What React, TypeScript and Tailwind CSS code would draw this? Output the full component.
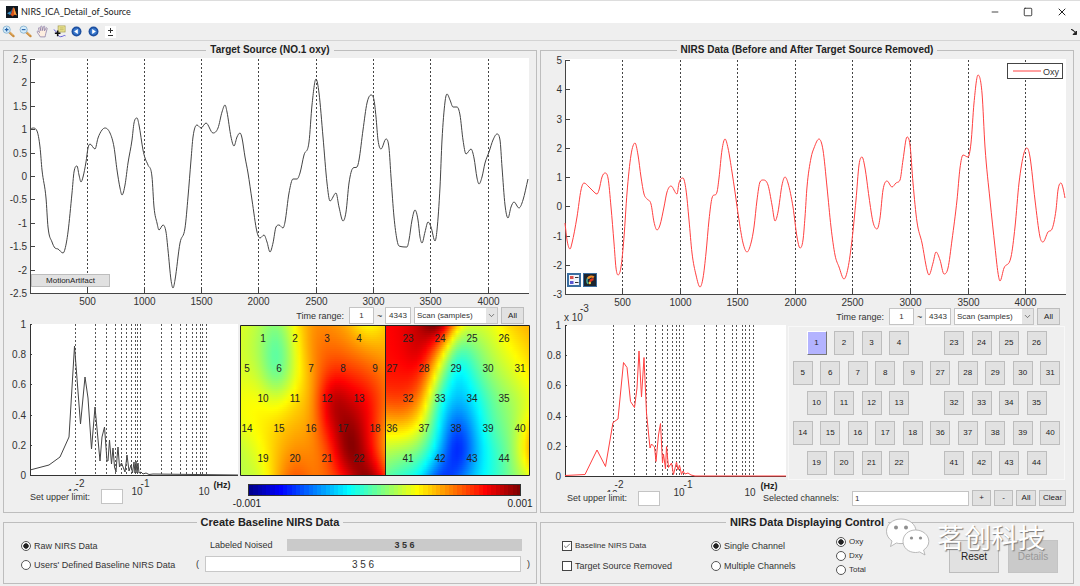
import React, { useState } from 'react';
import { Check, ChevronDown, Minus, Square, X } from 'lucide-react';

type Point = [number, number];

const sourceTrace: Point[] = [
    [30, 129], [33, 128], [37, 131], [40, 147], [42, 170], [46, 198], [48, 227], [52, 242], [55, 248], [58, 249], [63, 253], [65, 249],
    [68, 232], [72, 193], [74, 172], [77, 166], [79, 175], [81, 182], [83, 177], [86, 162], [88, 148], [90, 144], [95, 149], [98, 138],
    [102, 130], [105, 128], [110, 133], [114, 147], [117, 170], [120, 188], [122, 195], [125, 185], [128, 163], [132, 140], [134, 123],
    [137, 118], [139, 125], [143, 150], [145, 158], [148, 165], [152, 177], [154, 207], [157, 223], [159, 230], [163, 225], [166, 232],
    [168, 250], [171, 280], [173, 288], [175, 280], [180, 243], [185, 228], [188, 197], [191, 160], [193, 137], [197, 125], [201, 128],
    [206, 123], [213, 133], [218, 128], [222, 112], [225, 105], [227, 112], [231, 137], [234, 146], [237, 137], [240, 133], [242, 138],
    [245, 157], [248, 173], [252, 200], [257, 232], [260, 238], [264, 235], [267, 242], [270, 252], [273, 243], [276, 227], [279, 225],
    [283, 228], [285, 222], [289, 193], [293, 179], [297, 179], [300, 173], [304, 155], [309, 142], [312, 105], [316, 79], [319, 93],
    [323, 137], [327, 183], [330, 201], [336, 193], [339, 207], [343, 221], [346, 212], [349, 183], [353, 168], [357, 167], [359, 160],
    [363, 130], [367, 103], [371, 95], [374, 100], [376, 117], [378, 140], [381, 149], [386, 139], [389, 148], [391, 177], [394, 217],
    [397, 240], [399, 246], [407, 247], [409, 240], [412, 220], [415, 210], [418, 220], [420, 237], [422, 243], [425, 232], [428, 222],
    [431, 227], [435, 241], [437, 230], [440, 187], [442, 140], [445, 102], [447, 94], [450, 100], [453, 107], [457, 107], [460, 115],
    [463, 140], [466, 154], [471, 149], [474, 158], [477, 178], [479, 184], [482, 177], [485, 163], [489, 152], [493, 140], [497, 134],
    [500, 140], [502, 167], [505, 205], [508, 218], [511, 207], [514, 202], [519, 208], [523, 200], [528, 179],
];

const oxyTrace: Point[] = [
    [565, 223], [567, 240], [570, 249], [572, 243], [577, 217], [581, 190], [584, 183], [589, 187], [593, 191], [597, 194], [599, 190],
    [602, 177], [605, 173], [608, 178], [611, 207], [614, 243], [616, 268], [618, 275], [621, 267], [624, 237], [627, 193], [631, 155],
    [635, 143], [638, 155], [641, 177], [644, 194], [647, 199], [651, 204], [654, 222], [657, 230], [660, 225], [664, 207], [667, 192],
    [671, 186], [677, 194], [679, 183], [683, 178], [686, 190], [689, 220], [692, 253], [696, 275], [700, 287], [703, 278], [706, 253],
    [709, 220], [712, 198], [717, 192], [719, 178], [722, 150], [725, 139], [728, 148], [732, 172], [735, 192], [739, 220], [743, 243],
    [747, 252], [751, 243], [754, 227], [757, 200], [760, 182], [763, 180], [768, 185], [772, 205], [775, 221], [778, 212], [782, 185],
    [785, 177], [788, 183], [793, 207], [797, 237], [800, 248], [803, 240], [805, 217], [807, 187], [811, 158], [814, 148], [819, 139],
    [823, 150], [827, 187], [831, 227], [835, 255], [839, 267], [844, 279], [848, 268], [852, 240], [856, 200], [859, 165], [862, 157],
    [865, 168], [869, 197], [873, 222], [877, 229], [880, 218], [883, 190], [887, 181], [892, 187], [896, 183], [900, 180], [903, 160],
    [907, 137], [910, 145], [913, 183], [917, 222], [922, 243], [927, 270], [929, 275], [933, 263], [936, 252], [940, 260], [944, 274],
    [948, 268], [952, 240], [957, 200], [960, 168], [963, 155], [968, 157], [971, 143], [974, 103], [978, 75], [982, 93], [985, 147],
    [990, 200], [995, 247], [998, 273], [1000, 281], [1004, 268], [1011, 257], [1015, 227], [1019, 183], [1024, 153], [1027, 148],
    [1030, 157], [1035, 200], [1040, 237], [1043, 242], [1048, 232], [1052, 229], [1056, 210], [1058, 190], [1061, 183], [1063, 188],
    [1065, 198],
];

const sourceSpectrum =
    '30,470 49,465 60,457 69,437 74.5,346 80.5,424 85,377 88,398 91.5,449 95,407 100,461 102,437 104.5,427 107,461 108,461 109.5,440 111.5,464 113,448 114.5,467 116,472 117,458 118,447 119.5,467 121.5,463 125,472 127,455 129,471 131,465 132.5,473 134,462 135,473 136,461 137,473 138,463 139,473 141,472 143,474 146,473 149,474.5 153,474 238,475';

const oxySpectrum =
    '565,475.5 575,475 585,474.5 597,450 605.5,466.5 613,422.5 618,419 623.5,362.5 627,367.5 630.5,401.5 634.5,407.5 637,388 639,351 641.5,397 644,357.5 646.5,413 650,448 651.5,444 654.5,447 656,461.5 658.5,435 660.5,423.5 662.5,463 663.5,454 665.5,469 666.5,446.5 668.5,467.5 671.5,463 673.5,474.5 676.5,462 678,470 679.5,465 681.5,474.5 683,471 685,474 688,473 691,475 695,476 786,476';

const sourceFreqLines = [75, 95, 106, 115, 121, 126, 131, 135, 137, 140, 161, 171, 180, 186, 192, 196, 200, 202, 206];
const oxyFreqLines = [613, 634, 646, 655, 662, 667, 672, 676, 679, 683, 704, 716, 724, 732, 736, 742, 745, 749, 753];

// Relative activation, sampled on a 9 x 7 lattice for each probe
const leftField = [
    [0.59, 0.56, 0.47, 0.63, 0.75, 0.74, 0.71, 0.61, 0.67],
    [0.58, 0.55, 0.4, 0.6, 0.76, 0.78, 0.76, 0.73, 0.71],
    [0.59, 0.58, 0.42, 0.6, 0.72, 0.86, 0.84, 0.81, 0.76],
    [0.62, 0.63, 0.59, 0.66, 0.7, 1.01, 0.92, 0.89, 0.78],
    [0.61, 0.64, 0.67, 0.7, 0.71, 0.93, 1.01, 0.9, 0.74],
    [0.56, 0.61, 0.69, 0.74, 0.73, 0.81, 1.08, 0.91, 0.71],
    [0.56, 0.57, 0.7, 0.81, 0.74, 0.79, 0.92, 1.03, 0.82],
];

const rightField = [
    [0.87, 0.89, 0.94, 1.08, 0.6, 0.57, 0.6, 0.67, 0.7],
    [0.87, 0.88, 0.96, 0.72, 0.4, 0.49, 0.57, 0.62, 0.67],
    [0.86, 0.86, 0.86, 0.56, 0.29, 0.44, 0.53, 0.58, 0.64],
    [0.81, 0.83, 0.76, 0.39, 0.29, 0.36, 0.48, 0.53, 0.59],
    [0.68, 0.7, 0.63, 0.37, 0.16, 0.32, 0.47, 0.51, 0.64],
    [0.56, 0.54, 0.5, 0.34, 0.06, 0.29, 0.42, 0.49, 0.72],
    [0.48, 0.43, 0.39, 0.17, 0.18, 0.33, 0.41, 0.49, 0.61],
];

const channelRows = [
    { left: [1, 2, 3, 4], right: [23, 24, 25, 26] },
    { left: [5, 6, 7, 8, 9], right: [27, 28, 29, 30, 31] },
    { left: [10, 11, 12, 13], right: [32, 33, 34, 35] },
    { left: [14, 15, 16, 17, 18], right: [36, 37, 38, 39, 40] },
    { left: [19, 20, 21, 22], right: [41, 42, 43, 44] },
];

const clamp = (v: number) => Math.max(0, Math.min(1, v));

const jet = (v: number) => {
    const c = [3, 2, 1].map((k) => Math.round(255 * clamp(1.5 - Math.abs(4 * v - k))));
    return `rgb(${c[0]},${c[1]},${c[2]})`;
};

// Cubic B-spline over evenly spaced values, t runs from 0 to 1
const spline = (values: number[], t: number) => {
    const pos = t * (values.length - 1);
    const i = Math.min(Math.floor(pos), values.length - 2);
    const f = pos - i;
    const g = 1 - f;
    const b = values[i];
    const c = values[i + 1];
    const a = values[i - 1] ?? 2 * b - c;
    const d = values[i + 2] ?? 2 * c - b;
    return (g * g * g * a + (3 * f * f * f - 6 * f * f + 4) * b + (3 * g * g * g - 6 * g * g + 4) * c + f * f * f * d) / 6;
};

// Monotone cubic path, so that peaks do not overshoot
const smoothPath = (pts: Point[]) => {
    const slopes = pts.slice(1).map((p, i) => (p[1] - pts[i][1]) / (p[0] - pts[i][0]));
    const tangents = pts.map((_, i) => {
        const before = slopes[i - 1];
        const after = slopes[i];
        if (before === undefined) return after;
        if (after === undefined) return before;
        if (before * after <= 0) return 0;
        const limit = 3 * Math.min(Math.abs(before), Math.abs(after));
        return Math.sign(before) * Math.min(Math.abs(before + after) / 2, limit);
    });
    let d = `M${pts[0][0]},${pts[0][1]}`;
    for (let i = 1; i < pts.length; i++) {
        const [x0, y0] = pts[i - 1];
        const [x1, y1] = pts[i];
        const h = (x1 - x0) / 3;
        d += `C${x0 + h},${(y0 + tangents[i - 1] * h).toFixed(2)} ${x1 - h},${(y1 - tangents[i] * h).toFixed(2)} ${x1},${y1}`;
    }
    return d;
};

interface TimeChartProps {
    label: string;
    viewBox: string;
    left: number;
    right: number;
    top: number;
    bottom: number;
    firstTick: number;
    step: number;
    yTicks: string[];
    trace: Point[];
    color: string;
    children?: React.ReactNode;
}

const TimeChart = ({ label, viewBox, left, right, top, bottom, firstTick, step, yTicks, trace, color, children }: TimeChartProps) => {
    const ticks = [500, 1000, 1500, 2000, 2500, 3000, 3500, 4000];
    const yStep = (bottom - top) / (yTicks.length - 1);

    return (
        <svg viewBox={viewBox} className="block h-auto w-full overflow-visible text-[10px]" role="img" aria-label={label}>
            <rect x={left} y={top - 1} width={right - left} height={bottom - top + 1} fill="#fff" />
            {ticks.map((tick, i) => {
                const x = Math.round(firstTick + i * step) + 0.5;
                return (
                    <g key={tick}>
                        <line x1={x} x2={x} y1={top} y2={bottom} stroke="#444" strokeDasharray="2 2" />
                        <line x1={x} x2={x} y1={bottom - 5} y2={bottom} stroke="#444" />
                        <text x={x} y={bottom + 12} textAnchor="middle" fill="#333">{tick}</text>
                    </g>
                );
            })}
            {yTicks.map((tick, i) => {
                const y = Math.round(top + i * yStep);
                return (
                    <g key={tick}>
                        <line x1={left} x2={left + 5} y1={y + 0.5} y2={y + 0.5} stroke="#444" />
                        <text x={left - 3} y={y + 4} textAnchor="end" fill="#333">{tick}</text>
                    </g>
                );
            })}
            <path d={`M${left + 0.5},${top}V${bottom + 0.5}H${right}`} fill="none" stroke="#444" />
            <path d={smoothPath(trace)} fill="none" stroke={color} />
            {children}
        </svg>
    );
};

interface SpectrumProps {
    label: string;
    viewBox: string;
    left: number;
    right: number;
    top: number;
    lines: number[];
    points: string;
    color: string;
    exponents: Point;
    bases: [number, number, number];
    hz: number;
    children?: React.ReactNode;
}

const Spectrum = ({ label, viewBox, left, right, top, lines, points, color, exponents, bases, hz, children }: SpectrumProps) => {
    const bottom = top + 151;
    const clipId = `clip-${left}`;

    return (
        <svg viewBox={viewBox} className="block h-auto w-full overflow-visible text-[10px]" role="img" aria-label={label}>
            <clipPath id={clipId}>
                <rect x={left} y={bottom} width="100" height="16" />
            </clipPath>
            <rect x={left} y={top} width={right - left} height={151} fill="#fff" />
            {lines.map((x) => (
                <line key={x} x1={x + 0.5} x2={x + 0.5} y1={top} y2={bottom} stroke="#555" strokeDasharray="2 2" />
            ))}
            {['1', '0.8', '0.6', '0.4', '0.2', '0'].map((tick, i) => {
                const y = Math.round(top + i * 30.2);
                return (
                    <g key={tick}>
                        <line x1={left} x2={left + 2} y1={y + 0.5} y2={y + 0.5} stroke="#444" />
                        <text x={left - 4} y={y + 4} textAnchor="end" fill="#333">{tick}</text>
                    </g>
                );
            })}
            <path d={`M${left + 0.5},${top}V${bottom + 0.5}H${right}`} fill="none" stroke="#333" />
            <polyline points={points} fill="none" stroke={color} />
            <text x={exponents[0]} y={bottom + 12} textAnchor="middle" fill="#333">-2</text>
            <text x={exponents[1]} y={bottom + 12} textAnchor="middle" fill="#333">-1</text>
            <text x={bases[0]} y={bottom + 22} textAnchor="middle" fill="#333" clipPath={`url(#${clipId})`}>10</text>
            <text x={bases[1]} y={bottom + 20} textAnchor="middle" fill="#333">10</text>
            <text x={bases[2]} y={bottom + 20} textAnchor="middle" fill="#333">10</text>
            <text x={hz} y={bottom + 13} textAnchor="middle" fontWeight="bold" fontSize="9" fill="#222">(Hz)</text>
            {children}
        </svg>
    );
};

const HeatHalf = ({ field, x, name }: { field: number[][]; x: number; name: string }) => {
    const rows = Array.from({ length: 75 }, (_, r) => {
        const t = r / 74;
        return field[0].map((_, c) => spline(field.map((line) => line[c]), t));
    });

    return (
        <>
            {rows.map((row, r) => (
                <g key={r}>
                    <linearGradient id={`${name}-${r}`}>
                        {Array.from({ length: 33 }, (_, s) => (
                            <stop key={s} offset={s / 32} stopColor={jet(clamp(spline(row, s / 32)))} />
                        ))}
                    </linearGradient>
                    <rect x={x} y={325 + r * 2} width="144" height="2" fill={`url(#${name}-${r})`} shapeRendering="crispEdges" />
                </g>
            ))}
        </>
    );
};

const HeatMap = () => (
    <svg viewBox="240 324 296 186" className="block h-auto w-full overflow-visible text-[10px]" role="img" aria-label="Source topography">
        <HeatHalf field={leftField} x={241} name="heat-left" />
        <HeatHalf field={rightField} x={385} name="heat-right" />
        <path d="M240.5,325.5H529.5V475.5H240.5ZM385.5,325V475" fill="none" stroke="#222" />
        {channelRows.map((row, r) =>
            [row.left, row.right].map((side, s) =>
                side.map((channel, i) => (
                    <text key={channel} x={(side.length === 4 ? 263 : 247) + s * 145 + i * 32} y={342 + r * 30} textAnchor="middle" fill="#222">
                        {channel}
                    </text>
                ))
            )
        )}
        {Array.from({ length: 64 }, (_, i) => (
            <rect key={i} x={249 + i * 4.25} y="484" width={Math.min(6, 272 - i * 4.25)} height="12" fill={jet((i + 1) / 64)} shapeRendering="crispEdges" />
        ))}
        <rect x="248.5" y="484.5" width="272" height="11" fill="none" stroke="#333" />
        <text x="247" y="507" textAnchor="middle" fill="#222">-0.001</text>
        <text x="520" y="507" textAnchor="middle" fill="#222">0.001</text>
    </svg>
);

const Button = ({ className = '', ...props }: React.ButtonHTMLAttributes<HTMLButtonElement>) => (
    <button type="button" className={`border border-[#bdbdbd] bg-[#e1e1e1] text-[8px] leading-none text-[#222] ${className}`} {...props} />
);

const Panel = ({ title, large, children }: { title: string; large?: boolean; children: React.ReactNode }) => (
    <fieldset className="relative min-w-0 border border-[#bdbdbd]">
        <legend className={`mx-auto h-[14px] px-1 leading-[14px] font-bold text-[#222] ${large ? 'text-[11px]' : 'text-[10px]'}`}>{title}</legend>
        {children}
    </fieldset>
);

const TimeRange = ({ id, className, unitClass }: { id: string; className: string; unitClass: string }) => {
    const [from, setFrom] = useState('1');
    const [to, setTo] = useState('4343');

    return (
        <div className={`flex h-[17px] items-center justify-end gap-[3px] ${className}`}>
            <label htmlFor={`${id}-from`} className="pr-[2px]">Time range:</label>
            <input id={`${id}-from`} value={from} onChange={(e) => setFrom(e.target.value)} className="h-full w-[25px] border border-[#c4c4c4] bg-white text-center text-[8px]" />
            <span className="w-[5px] text-center">~</span>
            <input aria-label="Range end" value={to} onChange={(e) => setTo(e.target.value)} className="h-full w-[26px] border border-[#c4c4c4] bg-white text-center text-[8px]" />
            <div className={`relative h-full ${unitClass}`}>
                <select aria-label="Range unit" className="h-full w-full appearance-none border border-[#c4c4c4] bg-white pl-[2px] text-[8px] leading-none">
                    <option>Scan (samples)</option>
                    <option>Time (s)</option>
                </select>
                <span className="pointer-events-none absolute inset-y-px right-px flex w-[11px] items-center justify-center bg-[#e4e4e4]">
                    <ChevronDown size={9} color="#555" />
                </span>
            </div>
            <Button className="h-full w-[23px]">All</Button>
        </div>
    );
};

const UpperLimit = ({ id, className }: { id: string; className: string }) => (
    <div className={`flex h-[15px] items-center ${className}`}>
        <label htmlFor={id} className="w-[71px]">Set upper limit:</label>
        <input id={id} className="h-full w-[22px] border border-[#c4c4c4] bg-white text-center text-[8px]" />
    </div>
);

interface RadioProps {
    name: string;
    label: string;
    checked: boolean;
    onSelect: () => void;
    className?: string;
}

const Radio = ({ name, label, checked, onSelect, className = '' }: RadioProps) => (
    <label className={`flex items-center gap-[3px] whitespace-nowrap ${className}`}>
        <input
            type="radio"
            name={name}
            checked={checked}
            onChange={onSelect}
            className="h-[10px] w-[10px] shrink-0 appearance-none rounded-full border border-[#555] bg-white checked:bg-[radial-gradient(circle_closest-side,#222_60%,#fff_75%)]"
        />
        {label}
    </label>
);

const Tick = ({ label, checked, onToggle, className = '' }: { label: string; checked: boolean; onToggle: () => void; className?: string }) => (
    <label className={`flex items-center gap-[3px] whitespace-nowrap ${className}`}>
        <span className="relative h-[10px] w-[10px] shrink-0">
            <input type="checkbox" checked={checked} onChange={onToggle} className="block h-full w-full appearance-none border border-[#444] bg-white" />
            {checked && <Check size={8} className="pointer-events-none absolute top-px left-px" color="#333" />}
        </span>
        {label}
    </label>
);

const MatlabLogo = () => (
    <svg viewBox="0 0 12 12" className="h-3 w-3">
        <rect width="12" height="12" fill="#101820" />
        <path d="M1 7.2 4 5.6 5.6 7 4 9Z" fill="#3a8fc4" />
        <path d="M4 5.6C5.8 4.8 6.4 1.6 7.4 1.5L5.6 7Z" fill="#2b5f8c" />
        <path d="M4 9C6.2 7.8 6.4 1.5 7.6 1.5S9.2 6.6 11 9.4C9.6 8.4 8.4 8 6.6 10.6 5.8 9.6 5 9 4 9Z" fill="#d9541e" />
        <path d="M7.6 1.5C8.6 2 9.2 6.6 11 9.4 9.8 8.6 9 8.4 8.2 8.8Z" fill="#f2a33a" />
    </svg>
);

const Magnifier = ({ sign }: { sign: '+' | '-' }) => (
    <svg viewBox="0 0 14 14" className="h-[13px] w-[13px]">
        <path d="M8 8 12.4 12" stroke="#c98b3c" strokeWidth="2.4" strokeLinecap="round" />
        <path d="M8 7.4 12 11" stroke="#f1c27a" strokeWidth="0.8" />
        <circle cx="5" cy="5" r="3.9" fill="#d5ecfa" stroke="#8bb4d0" />
        <path d={sign === '+' ? 'M3 5H7M5 3V7' : 'M3 5H7'} stroke="#1f5fa8" strokeWidth="1.2" />
    </svg>
);

const Hand = () => (
    <svg viewBox="0 0 14 14" className="h-[13px] w-[13px]">
        <path
            d="M4.6 12.8C3.6 10.6 1.8 9 1.2 7.6 .9 6.6 2 6.2 2.7 7L3.8 8.2 2.7 3.8C2.5 2.7 3.8 2.4 4.2 3.4L5.2 6.2 5 2C5 .9 6.4.9 6.6 2L7.1 6 8 1.9C8.3.9 9.6 1.2 9.5 2.2L9.2 6.3 10.7 3.5C11.2 2.6 12.3 3 12 4L10.6 9C10.3 10.6 10 11.6 9.8 12.8Z"
            fill="#fdeee0"
            stroke="#8579a6"
            strokeWidth="0.8"
        />
    </svg>
);

const DataCursor = () => (
    <svg viewBox="0 0 14 14" className="h-[13px] w-[13px]">
        <path d="M.8 5C4 6 4.6 12.6 8 12.6S11.4 10.4 13.4 11.6" fill="none" stroke="#5b54d6" />
        <rect x="5.5" y="1" width="7.5" height="6.5" fill="#f4ee9a" stroke="#a39a4c" strokeWidth="0.8" />
        <path d="M7 3.2H11.6M7 5.2H11.6" stroke="#a39a4c" strokeWidth="0.8" />
        <path d="M5 6V12M2 9H8" stroke="#111" strokeWidth="1.6" />
    </svg>
);

const RoundArrow = ({ flip }: { flip?: boolean }) => (
    <svg viewBox="0 0 12 12" className="h-[11px] w-[11px]">
        <circle cx="6" cy="6" r="5.4" fill="#1d4f9f" />
        <circle cx="6" cy="6" r="3.6" fill="#3b7bd0" />
        <path d={flip ? 'M4.6 3.4 8.6 6 4.6 8.6Z' : 'M7.4 3.4 3.4 6 7.4 8.6Z'} fill="#fff" />
    </svg>
);

const toolbar = [
    { name: 'Zoom in', icon: <Magnifier sign="+" /> },
    { name: 'Zoom out', icon: <Magnifier sign="-" /> },
    { name: 'Pan', icon: <Hand /> },
    { name: 'Data cursor', icon: <DataCursor /> },
    { name: 'Previous', icon: <RoundArrow /> },
    { name: 'Next', icon: <RoundArrow flip /> },
    {
        name: 'Plus minus',
        icon: (
            <svg viewBox="0 0 11 12" className="h-3 w-[11px]">
                <rect width="11" height="12" fill="#fff" />
                <path d="M3 4.5H8M5.5 2V7M3 9.5H8" stroke="#333" />
            </svg>
        ),
    },
];

const Watermark = () => (
    <div className="pointer-events-none absolute -top-[12px] right-[28px] flex items-center gap-[6px]">
        <svg viewBox="0 0 46 40" className="h-10 w-[46px]">
            <g fill="#fff" stroke="#a8a8a8" strokeWidth="0.8">
                <path d="M16 2C7.5 2 1.5 7.6 1.5 14.3 1.5 18.4 3.7 21.7 7 24L5.5 29.5 11.4 26C13 26.5 14.5 26.6 16 26.6 24.5 26.6 31 21 31 14.3 31 7.6 24.5 2 16 2Z" />
                <path d="M30.5 13C23.3 13 18 18 18 24.3S23.3 35.5 30.5 35.5C32 35.5 33.3 35.3 34.6 34.9L40 38 38.6 33C41.8 31 43.8 28 43.8 24.3 43.8 18 37.7 13 30.5 13Z" />
            </g>
            <g fill="#8f8f8f">
                <circle cx="11" cy="10.5" r="2" />
                <circle cx="21" cy="10.5" r="2" />
                <circle cx="26.5" cy="21" r="1.6" />
                <circle cx="35.5" cy="21" r="1.6" />
            </g>
        </svg>
        <span className="font-['Noto_Sans_CJK_SC',sans-serif] text-[27px] leading-7 whitespace-nowrap text-white [text-shadow:1px_1px_1px_#777]">茗创科技</span>
    </div>
);

const App = () => {
    const [selected, setSelected] = useState(1);
    const [baselineMode, setBaselineMode] = useState('raw');
    const [showBaseline, setShowBaseline] = useState(true);
    const [showRemoved, setShowRemoved] = useState(false);
    const [channelMode, setChannelMode] = useState('single');
    const [signal, setSignal] = useState('Oxy');
    const [custom, setCustom] = useState('3 5 6');

    return (
        <div className="min-h-screen bg-[#efefef] font-['Liberation_Sans',Arial,sans-serif] text-[9px] leading-[12px] text-[#333]">
            <header className="flex h-[23px] items-center border-t border-[#ddd] bg-white pr-[12px] pl-[6px]">
                <MatlabLogo />
                <h1 className="ml-[3px] flex-1 font-['Lato',sans-serif] text-[9px] text-[#222]">NIRS_ICA_Detail_of_Source</h1>
                <div className="flex items-center gap-[23px] text-[#222]">
                    <button type="button" aria-label="Minimize"><Minus size={10} strokeWidth={2} /></button>
                    <button type="button" aria-label="Maximize"><Square size={10} strokeWidth={2} /></button>
                    <button type="button" aria-label="Close"><X size={12} strokeWidth={2} /></button>
                </div>
            </header>

            <nav className="flex h-[18px] items-center border-b border-[#d4d4d4] pr-[2px]">
                {toolbar.map((item) => (
                    <button key={item.name} type="button" title={item.name} className="flex w-[17px] items-center justify-center">
                        {item.icon}
                    </button>
                ))}
                <svg viewBox="0 0 8 8" className="ml-auto h-2 w-2">
                    <path d="M1 1.5C3 1.5 4 2.5 5 4.5M6.5 3V6.5H3Z" fill="#222" stroke="#222" />
                </svg>
            </nav>

            <main className="grid grid-cols-2 gap-x-[3px] gap-y-[2px] pt-[2px] pr-[6px] pl-[3px]">
                <Panel title="Target Source (NO.1 oxy)">
                    <div className="relative">
                        <TimeChart
                            label="Target source time course"
                            viewBox="4 57 532 250"
                            left={30}
                            right={529}
                            top={59}
                            bottom={293}
                            firstTick={86.5}
                            step={57.3}
                            yTicks={['2.5', '2', '1.5', '1', '0.5', '0', '-0.5', '-1', '-1.5', '-2', '-2.5']}
                            trace={sourceTrace}
                            color="#444"
                        />
                        <Button className="absolute bottom-[20px] left-[27px] h-[13px] w-[79px]">MotionArtifact</Button>
                    </div>
                    <TimeRange id="source" className="pr-[12px]" unitClass="w-[84px]" />
                    <div className="flex items-start">
                        <div className="min-w-0 flex-[236]">
                            <Spectrum
                                label="Target source spectrum"
                                viewBox="4 324 236 165"
                                left={30}
                                right={238}
                                top={324}
                                lines={sourceFreqLines}
                                points={sourceSpectrum}
                                color="#444"
                                exponents={[80, 145]}
                                bases={[73, 137, 204]}
                                hz={222}
                            />
                            <UpperLimit id="source-limit" className="pl-[26px]" />
                        </div>
                        <div className="min-w-0 flex-[296]">
                            <HeatMap />
                        </div>
                    </div>
                </Panel>

                <Panel title="NIRS Data (Before and After Target Source Removed)">
                    <div className="relative">
                        <TimeChart
                            label="NIRS data time course"
                            viewBox="541 57 532 250"
                            left={565}
                            right={1066}
                            top={60}
                            bottom={294}
                            firstTick={622}
                            step={57.6}
                            yTicks={['5', '4', '3', '2', '1', '0', '-1', '-2', '-3']}
                            trace={oxyTrace}
                            color="#ff4040"
                        >
                            <rect x="1007.5" y="63.5" width="55" height="15" fill="#fff" stroke="#444" />
                            <path d="M1013,71H1041" stroke="#ff4040" />
                            <text x="1059" y="75" textAnchor="end" fontSize="9" fill="#333">Oxy</text>
                        </TimeChart>
                        <div className="absolute bottom-[20px] left-[26px] flex gap-[2px]">
                            <button type="button" aria-label="Legend">
                                <svg viewBox="0 0 14 14" className="block h-[14px] w-[14px]">
                                    <rect x="1" y="1" width="12" height="12" fill="#f2f4fb" stroke="#3b6ea0" strokeWidth="2" />
                                    <rect x="3" y="3" width="3.5" height="3" fill="#d9534f" />
                                    <rect x="3" y="8" width="3.5" height="3" fill="#5a55d0" />
                                    <path d="M8 4.5H11.5M8 9.5H11.5" stroke="#333" />
                                </svg>
                            </button>
                            <button type="button" aria-label="Colors">
                                <svg viewBox="0 0 14 14" className="block h-[14px] w-[14px]">
                                    <rect x="0.5" y="0.5" width="13" height="13" fill="#1c2530" stroke="#3b6ea0" />
                                    <path d="M5.2 10.6C3.4 9.2 3.4 5.8 5.6 4.4" fill="none" stroke="#49b3a0" strokeWidth="1.4" />
                                    <path d="M5 5.6C6.4 3.2 9 3 10.8 4.4" fill="none" stroke="#f08a24" strokeWidth="2.2" />
                                    <path d="M7.4 9.4C6.8 7.4 8.4 6.2 10.6 6.4" fill="none" stroke="#e0341e" strokeWidth="2.2" />
                                    <circle cx="6.8" cy="10" r="1.2" fill="#f6d43c" />
                                </svg>
                            </button>
                        </div>
                    </div>
                    <div className="pt-px">
                        <TimeRange id="nirs" className="pr-[13px]" unitClass="w-[80px]" />
                    </div>
                    <div className="flex items-start">
                        <div className="min-w-0 flex-[247]">
                            <Spectrum
                                label="NIRS data spectrum"
                                viewBox="541 325 247 165"
                                left={565}
                                right={786}
                                top={325}
                                lines={oxyFreqLines}
                                points={oxySpectrum}
                                color="#ff4040"
                                exponents={[619, 688]}
                                bases={[612, 679, 750]}
                                hz={769}
                            >
                                <text x="564" y="321" fill="#333">x 10</text>
                                <text x="580" y="312" fill="#333">-3</text>
                            </Spectrum>
                        </div>
                        <div className="min-w-0 flex-[285]">
                            <div className="mt-px mr-[8px] grid grid-cols-20 gap-y-[6px] border border-[#f8f8f8] py-[4px]">
                                {channelRows.map((row) =>
                                    [row.left, row.right].map((side, s) =>
                                        side.map((channel, i) => {
                                            const offset = side.length === 4 ? 2 : 1;
                                            return (
                                                <div key={channel} className="col-span-2 flex justify-center" style={{ gridColumnStart: offset + s * 10 + i * 2 }}>
                                                    <Button
                                                        aria-pressed={selected === channel}
                                                        onClick={() => setSelected(channel)}
                                                        className={`h-[24px] w-[20px] ${selected === channel ? 'border-t-white border-r-[#777] border-b-[#777] border-l-white bg-[#b3b3ff]!' : ''}`}
                                                    >
                                                        {channel}
                                                    </Button>
                                                </div>
                                            );
                                        })
                                    )
                                )}
                            </div>
                        </div>
                    </div>
                    <div className="flex items-center pr-[7px] pb-[6px] pl-[26px]">
                        <UpperLimit id="nirs-limit" className="w-[196px]" />
                        <label htmlFor="channels" className="w-[89px] whitespace-nowrap">Selected channels:</label>
                        <input id="channels" value={selected} readOnly className="h-[15px] min-w-0 flex-1 border border-[#c4c4c4] bg-white pl-[2px] text-[8px]" />
                        <div className="ml-[3px] flex h-[16px] gap-[3px]">
                            <Button className="w-[19px]">+</Button>
                            <Button className="w-[19px]">-</Button>
                            <Button className="w-[20px]">All</Button>
                            <Button className="w-[27px]">Clear</Button>
                        </div>
                    </div>
                </Panel>

                <Panel title="Create Baseline NIRS Data" large>
                    <div className="flex h-[54px] pt-[10px] pr-[6px] pl-[17px]">
                        <div className="flex w-[173px] flex-col gap-[7px] pt-px">
                            <Radio name="baseline" label="Raw NIRS Data" checked={baselineMode === 'raw'} onSelect={() => setBaselineMode('raw')} />
                            <Radio name="baseline" label="Users' Defined Baseline NIRS Data" checked={baselineMode === 'user'} onSelect={() => setBaselineMode('user')} />
                        </div>
                        <div className="flex min-w-0 flex-1 flex-col gap-[5px]">
                            <div className="flex items-center pr-[8px] pl-[16px]">
                                <span className="w-[77px]">Labeled Noised</span>
                                <output className="flex-1 bg-[#cacaca] text-center font-bold">3 5 6</output>
                            </div>
                            <div className="flex h-[16px] items-center gap-[6px] pl-[2px]">
                                <span>(</span>
                                <input aria-label="User defined baseline" value={custom} onChange={(e) => setCustom(e.target.value)} className="h-full min-w-0 flex-1 border border-[#c8c8c8] bg-white text-center text-[10px]" />
                                <span>)</span>
                            </div>
                        </div>
                    </div>
                </Panel>

                <Panel title="NIRS Data Displaying Control" large>
                    <div className="flex h-[54px] pr-[15px] pl-[21px]">
                        <div className="flex w-[149px] flex-col gap-[8px] pt-[11px]">
                            <Tick label="Baseline NIRS Data" checked={showBaseline} onToggle={() => setShowBaseline(!showBaseline)} className="text-[8px]" />
                            <Tick label="Target Source Removed" checked={showRemoved} onToggle={() => setShowRemoved(!showRemoved)} />
                        </div>
                        <div className="flex w-[125px] flex-col gap-[8px] pt-[11px]">
                            <Radio name="mode" label="Single Channel" checked={channelMode === 'single'} onSelect={() => setChannelMode('single')} />
                            <Radio name="mode" label="Multiple Channels" checked={channelMode === 'multi'} onSelect={() => setChannelMode('multi')} />
                        </div>
                        <div className="flex flex-col gap-[2px] pt-[7px] text-[8px]">
                            {['Oxy', 'Dxy', 'Total'].map((item) => (
                                <Radio key={item} name="signal" label={item} checked={signal === item} onSelect={() => setSignal(item)} />
                            ))}
                        </div>
                        <div className="ml-auto flex gap-[9px] pt-[11px]">
                            <Button className="h-[33px] w-[50px] text-[10px]!">Reset</Button>
                            <Button disabled className="h-[33px] w-[50px] border-[#c4c4c4] bg-[#cacaca]! text-[10px]! text-[#999]!">Details</Button>
                        </div>
                    </div>
                    <Watermark />
                </Panel>
            </main>
        </div>
    );
};

export default App;
